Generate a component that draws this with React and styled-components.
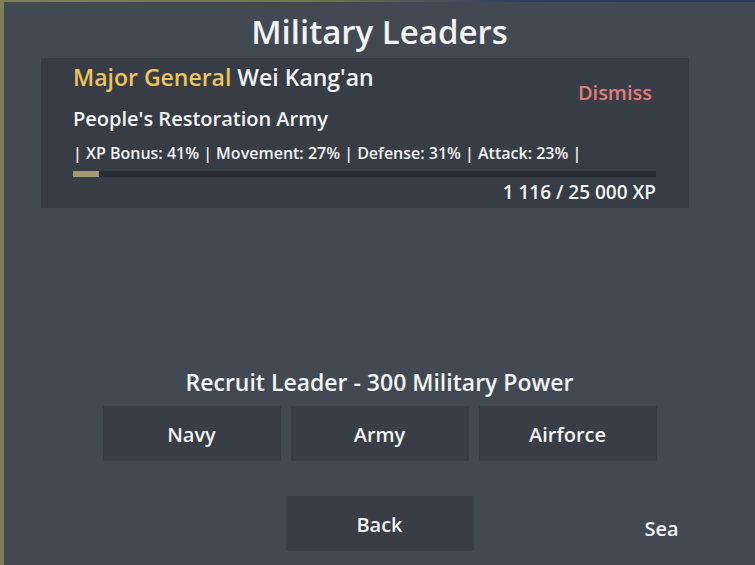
import React from "react";
import styled, { createGlobalStyle } from "styled-components";

const Global = createGlobalStyle`
  html, body { margin: 0; padding: 0; background: #424852; }
  body { font-family: "Open Sans", "Liberation Sans", sans-serif; }
`;

const Screen = styled.div`
  width: 755px;
  height: 565px;
  display: flex;
  background: linear-gradient(90deg, #7d7f58 0%, #6f7a4c 40%, #2f3a62 70%, #2c3460 100%);
  overflow: hidden;
`;

const Panel = styled.div`
  margin: 2px 0 0 4px;
  flex: 1;
  background: #434953;
  display: flex;
  flex-direction: column;
  align-items: center;
  padding-top: 10px;
  color: #f2f3f4;
  font-weight: 600;
`;

const Title = styled.h1`
  margin: 0;
  font-size: 33px;
  line-height: 40px;
  font-weight: 600;
`;

const Card = styled.div`
  align-self: flex-start;
  margin: 6px 0 0 37px;
  width: 648px;
  height: 150px;
  box-sizing: border-box;
  padding: 5px 37px 0 32px;
  background: #383d45;
  display: flex;
  flex-direction: column;
`;

const TopRow = styled.div`
  display: flex;
  justify-content: space-between;
  align-items: flex-start;
  height: 28px;
`;

const Name = styled.div`
  font-size: 23px;
  line-height: 28px;
  white-space: nowrap;
`;

const Rank = styled.span`
  color: #eec35e;
`;

const Dismiss = styled.span`
  color: #e27c7c;
  font-size: 20px;
  line-height: 24px;
  margin-top: 18px;
`;

const Faction = styled.div`
  font-size: 20px;
  line-height: 24px;
  margin-top: 16px;
`;

const Stats = styled.div`
  font-size: 16px;
  line-height: 20px;
  margin-top: 12px;
  white-space: nowrap;
`;

const Track = styled.div`
  margin: 8px -4px 0 0;
  height: 6px;
  background: #2a2d33;
`;

const Fill = styled.div`
  height: 100%;
  background: #a59a6f;
`;

const Xp = styled.div`
  align-self: flex-end;
  margin-right: -4px;
  font-size: 19px;
  line-height: 24px;
  margin-top: 3px;
`;

const Recruit = styled.div`
  margin-top: 160px;
  font-size: 23px;
  line-height: 28px;
`;

const ButtonRow = styled.div`
  display: grid;
  grid-template-columns: repeat(3, 178px);
  gap: 10px;
  margin-top: 10px;
`;

const Button = styled.button`
  height: 55px;
  border: 0;
  padding: 2px 0 0;
  background: #393e46;
  color: #f2f3f4;
  font-family: inherit;
  font-weight: 600;
  font-size: 20px;
  width: ${(p) => p.$w || "auto"};
`;

const Footer = styled.div`
  margin-top: 35px;
  width: 100%;
  display: grid;
  grid-template-columns: 1fr 188px 1fr;
  align-items: center;
`;

const Sea = styled.div`
  justify-self: start;
  margin-left: 171px;
  margin-top: 10px;
  font-size: 20px;
  line-height: 24px;
`;

export default function App() {
  const xp = 1116;
  const max = 25000;
  return (
    <Screen>
      <Global />
      <Panel>
        <Title>Military Leaders</Title>
        <Card>
          <TopRow>
            <Name>
              <Rank>Major General</Rank> Wei Kang'an
            </Name>
            <Dismiss>Dismiss</Dismiss>
          </TopRow>
          <Faction>People's Restoration Army</Faction>
          <Stats>| XP Bonus: 41% | Movement: 27% | Defense: 31% | Attack: 23% |</Stats>
          <Track>
            <Fill style={{ width: `${Math.max((xp / max) * 100, 4.5)}%` }} />
          </Track>
          <Xp>1 116 / 25 000 XP</Xp>
        </Card>
        <Recruit>Recruit Leader - 300 Military Power</Recruit>
        <ButtonRow>
          <Button>Navy</Button>
          <Button>Army</Button>
          <Button>Airforce</Button>
        </ButtonRow>
        <Footer>
          <span />
          <Button $w="188px">Back</Button>
          <Sea>Sea</Sea>
        </Footer>
      </Panel>
    </Screen>
  );
}
